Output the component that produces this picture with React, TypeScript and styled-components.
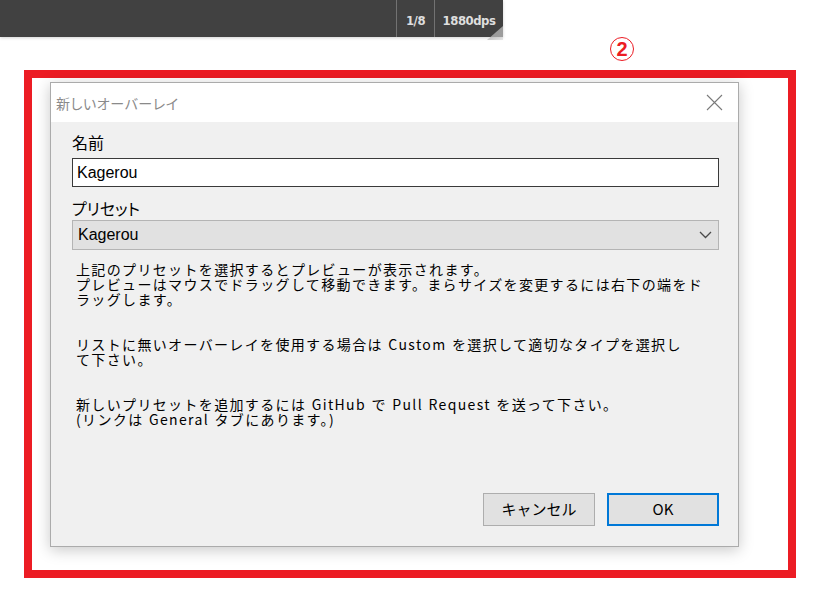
import React from "react";
import styled, { createGlobalStyle } from "styled-components";

const GlobalStyle = createGlobalStyle`
  html, body { margin: 0; padding: 0; background: #ffffff; }
  body { font-family: "Noto Sans CJK JP", "Noto Sans", sans-serif; color: #000; }
  * { box-sizing: border-box; }
`;

const Page = styled.div`
  width: 826px;
  height: 601px;
  display: flex;
  flex-direction: column;
  overflow: hidden;
`;

const TopBar = styled.div`
  position: relative;
  width: 503px;
  height: 37px;
  display: flex;
  background: #414141;
  box-shadow: 0 1px 3px rgba(0, 0, 0, 0.18);
`;

const BarFill = styled.div`
  flex: 1;
`;

const BarCell = styled.div<{ $w: number }>`
  width: ${(p) => p.$w}px;
  border-left: 1px solid #727272;
  display: flex;
  align-items: center;
  justify-content: center;
  color: #dedede;
  font-family: "DejaVu Sans Condensed", "DejaVu Sans", sans-serif;
  font-weight: bold;
  font-size: 13px;
  letter-spacing: -0.5px;
  padding-top: 4px;
`;

const Grip = styled.svg`
  position: absolute;
  right: -6px;
  bottom: -7px;
`;

const MarkerRow = styled.div`
  height: 33px;
  display: flex;
  align-items: flex-start;
  padding-left: 610px;
`;

const Marker = styled.div`
  width: 24px;
  height: 24px;
  border-radius: 50%;
  border: 1.5px solid #ec1c24;
  color: #ec1c24;
  display: flex;
  align-items: center;
  justify-content: center;
  font-family: "Liberation Sans", sans-serif;
  font-weight: bold;
  font-size: 20px;
  line-height: 1;
`;

const Frame = styled.div`
  margin-left: 24px;
  width: 772px;
  height: 508px;
  border: 8px solid #ec1c24;
  padding: 4px 0 0 18px;
`;

const Dialog = styled.div`
  width: 689px;
  height: 465px;
  border: 1px solid #ababab;
  background: #f0f0f0;
  display: flex;
  flex-direction: column;
  box-shadow: 0 3px 14px rgba(0, 0, 0, 0.22);
`;

const TitleBar = styled.div`
  height: 39px;
  background: #ffffff;
  display: flex;
  align-items: center;
  justify-content: space-between;
  padding: 0 15px 0 5px;
`;

const Title = styled.div`
  font-size: 14px;
  color: #8a8a8a;
  font-feature-settings: "palt";
  letter-spacing: 0.6px;
`;

const Body = styled.div`
  flex: 1;
  display: flex;
  flex-direction: column;
  padding: 0 19px 20px 21px;
`;

const Label = styled.div<{ $mt: number }>`
  margin-top: ${(p) => p.$mt}px;
  font-size: 16px;
  line-height: 20px;
  font-feature-settings: "palt";
`;

const TextBox = styled.div`
  margin-top: 6px;
  height: 29px;
  background: #ffffff;
  border: 1px solid #3a3a3a;
  display: flex;
  align-items: center;
  padding-left: 4px;
  font-family: "Liberation Sans", sans-serif;
  font-size: 16px;
`;

const Select = styled.div`
  margin-top: 2px;
  height: 30px;
  background: #e1e1e1;
  border: 1px solid #b4b4b4;
  display: flex;
  align-items: center;
  justify-content: space-between;
  padding: 0 6px 0 5px;
  font-family: "Liberation Sans", sans-serif;
  font-size: 16px;
`;

const Help = styled.div`
  margin-top: 12px;
  padding-left: 4px;
  display: flex;
  flex-direction: column;
  gap: 30px;
`;

const Para = styled.p`
  margin: 0;
  font-size: 14px;
  letter-spacing: 1.35px;
  word-spacing: 1px;
  line-height: 15px;
  white-space: nowrap;
`;

const ButtonRow = styled.div`
  margin-top: auto;
  display: flex;
  justify-content: flex-end;
  gap: 12px;
`;

const Button = styled.div<{ $default?: boolean }>`
  width: 112px;
  height: 33px;
  background: #e1e1e1;
  border: ${(p) => (p.$default ? "2px solid #0078d7" : "1px solid #adadad")};
  display: flex;
  align-items: center;
  justify-content: center;
  font-size: 15px;
  padding-bottom: 3px;
`;

export default function App() {
  return (
    <Page>
      <GlobalStyle />
      <TopBar>
        <BarFill />
        <BarCell $w={38}>1/8</BarCell>
        <BarCell $w={69}>1880dps</BarCell>
        <Grip width="24" height="18" viewBox="0 0 24 18">
          <defs>
            <linearGradient id="g" x1="0" y1="0" x2="1" y2="1">
              <stop offset="0" stopColor="#9a9a9a" stopOpacity="0.9" />
              <stop offset="1" stopColor="#d8d8d8" stopOpacity="0.6" />
            </linearGradient>
          </defs>
          <polygon points="18,0 18,14 2,14" fill="url(#g)" />
        </Grip>
      </TopBar>
      <MarkerRow>
        <Marker>2</Marker>
      </MarkerRow>
      <Frame>
        <Dialog>
          <TitleBar>
            <Title>新しいオーバーレイ</Title>
            <svg width="17" height="17" viewBox="0 0 17 17">
              <path d="M1 1 L16 16 M16 1 L1 16" stroke="#7a7a7a" strokeWidth="1.1" fill="none" />
            </svg>
          </TitleBar>
          <Body>
            <Label $mt={10}>名前</Label>
            <TextBox>Kagerou</TextBox>
            <Label $mt={11}>プリセット</Label>
            <Select>
              <span>Kagerou</span>
              <svg width="13" height="8" viewBox="0 0 13 8">
                <path d="M1 1 L6.5 6.5 L12 1" stroke="#4a4a4a" strokeWidth="1.3" fill="none" />
              </svg>
            </Select>
            <Help>
              <Para>
                上記のプリセットを選択するとプレビューが表示されます。
                <br />
                プレビューはマウスでドラッグして移動できます。まらサイズを変更するには右下の端をド
                <br />
                ラッグします。
              </Para>
              <Para>
                リストに無いオーバーレイを使用する場合は Custom を選択して適切なタイプを選択し
                <br />
                て下さい。
              </Para>
              <Para>
                新しいプリセットを追加するには GitHub で Pull Request を送って下さい。
                <br />
                (リンクは General タブにあります。)
              </Para>
            </Help>
            <ButtonRow>
              <Button>キャンセル</Button>
              <Button $default>OK</Button>
            </ButtonRow>
          </Body>
        </Dialog>
      </Frame>
    </Page>
  );
}
